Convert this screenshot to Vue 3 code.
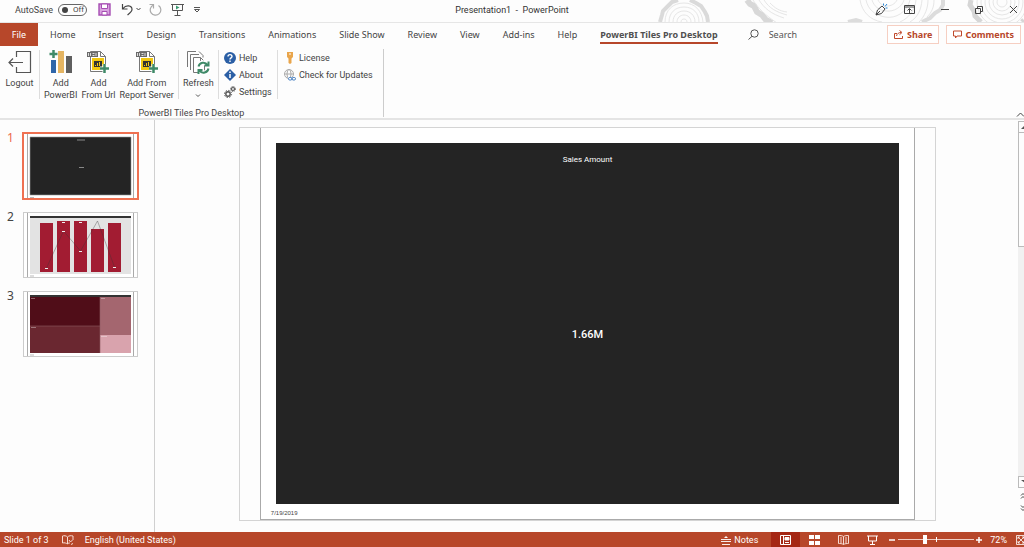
<script setup>
import { ref } from 'vue'

const tabs = ['Home', 'Insert', 'Design', 'Transitions', 'Animations', 'Slide Show', 'Review', 'View', 'Add-ins', 'Help', 'PowerBI Tiles Pro Desktop']
const activeTab = ref('PowerBI Tiles Pro Desktop')
const autosave = ref(false)
const zoom = ref(35)
const slide = ref(1)
const bars = [
  { x: 17, y: 11 },
  { x: 34, y: 9 },
  { x: 51, y: 9 },
  { x: 68, y: 17 },
  { x: 85, y: 11 },
]
</script>

<template>
  <div class="app">
    <header class="titlebar">
      <svg class="rings" width="366" height="22" viewBox="0 0 366 22" aria-hidden="true">
        <g fill="none" stroke="#e6e6e6">
          <path d="M2 22l2-7 1-4 5-5 4-4 6-2M32 0l6 3 5 3 4 6 2 4 1 6" stroke="#dadada" stroke-width="4" />
          <path d="M7 22c0-12 8-19 19-19s18 8 19 19M11 22c0-9 6-15 15-15s15 6 15 15M15 22c0-7 5-11 11-11s11 4 11 11M19 22c0-4 3-7 7-7s7 3 7 7M23 22c0-4 6-4 6 0" />
          <path d="M89 0l3 4 4 2 3 6 5 3 4 5 6 3" stroke="#d8d8d8" stroke-width="6" />
          <path d="M95 0c5 8 12 15 24 23M101 0c5 8 12 14 25 18M106 0c5 8 12 12 23 15M112 3c5 5 9 8 17 9" />
          <path d="M190 22l8-2 6 2M264 22l8-4 5-5 5-3 3-5V0" stroke="#dcdcdc" stroke-width="4" />
          <path d="M202 0c2 12 10 20 22 22M208 0c2 9 8 15 19 17s22-5 25-17M214 0c2 6 6 10 14 11s16-4 18-11M220 0c2 4 5 6 9 6s8-2 10-6M258 0c-1 10-7 18-16 22M264 0c-1 10-4 17-12 22M270 0c0 8-3 16-9 22M276 0c0 7-2 12-7 17" />
          <path d="M313 0l-1 5 4 6 1 5 6 6M364 22l2-2" stroke="#d6d6d6" stroke-width="5" />
          <circle cx="344" cy="2" r="25" /><circle cx="344" cy="2" r="21" /><circle cx="344" cy="2" r="17" />
          <circle cx="344" cy="2" r="13" /><circle cx="344" cy="2" r="9" /><circle cx="344" cy="2" r="5" />
        </g>
      </svg>
      <div class="quick">
        <label class="autosave">AutoSave
          <span class="pill"><input v-model="autosave" type="checkbox" /><i></i><span>Off</span></span>
        </label>
        <button class="ico save" aria-label="Save">
          <svg width="13" height="13" viewBox="0 0 13 13"><path d="M1 1h11v11H1z" fill="#d9a3e0" stroke="#a64db3" stroke-width="1.4" /><path d="M3.5 1h6v4.500h-6z" fill="#fff" stroke="#a64db3" /><path d="M4 8.500h5V12H4z" fill="#fff" stroke="#a64db3" /></svg>
        </button>
        <button class="ico undo" aria-label="Undo">
          <svg width="20" height="13" viewBox="0 0 20 13" fill="none" stroke="#444"><path d="M1.500 1v5h5M2 5.500C5 1.500 11 2 11 6.500c0 2-2 3.500-4.500 5.500" stroke-width="1.2" /><path d="M15.500 5l2 2 2-2" /></svg>
        </button>
        <button class="ico redo" aria-label="Redo">
          <svg width="13" height="13" viewBox="0 0 13 13" fill="none" stroke="#aaa" stroke-width="1.200"><path d="M4.500 2a5.300 5.300 0 1 0 5 .5M.5 1.500h4v4" /></svg>
        </button>
        <button class="ico show" aria-label="Start slide show">
          <svg width="13" height="13" viewBox="0 0 13 13" fill="none" stroke="#555"><path d="M0 1.500h13M1.500 2v5.500h10V2M6.500 8v4M3.500 12.500h6" /><path d="M5 2.500v4l3.500-2z" fill="#3b9a72" stroke="none" /></svg>
        </button>
        <button class="ico" aria-label="Customize toolbar">
          <svg width="6" height="6" viewBox="0 0 6 6"><path d="M0 .5h6M.5 2.500h5L3 5z" fill="none" stroke="#555" /></svg>
        </button>
      </div>
      <h1>Presentation1&nbsp; -&nbsp; PowerPoint</h1>
      <div class="window">
        <button class="ico" aria-label="Ink">
          <svg width="13" height="13" viewBox="0 0 13 13" fill="none" stroke="#444"><path d="M1 12l1.500-5L7 3l3 3-3.500 4.500zM1 12l4-4" /><path d="M8.500 2.500V.5M10 3.500L12 1M10.500 5h2" stroke="#2b88d8" /></svg>
        </button>
        <button class="ico" aria-label="Ribbon display">
          <svg width="11" height="9" viewBox="0 0 11 9" fill="none" stroke="#444"><path d="M.5.5h10v8H.5zM.5 2h10M5.500 8V4M3.500 5.500l2-2 2 2" /></svg>
        </button>
        <button class="ico" aria-label="Minimize"><svg width="8" height="9" viewBox="0 0 8 9"><path d="M0 4.500h8" stroke="#444" /></svg></button>
        <button class="ico" aria-label="Restore"><svg width="8" height="8" viewBox="0 0 8 8" fill="none" stroke="#444"><path d="M.5 2.500h5v5h-5zM2.500 2V.5h5v5H6" /></svg></button>
        <button class="ico" aria-label="Close"><svg width="9" height="9" viewBox="0 0 9 9" stroke="#444"><path d="M1 1l7 7M8 1L1 8" /></svg></button>
      </div>
    </header>

    <nav class="tabs">
      <button class="file">File</button>
      <button v-for="t in tabs" :key="t" class="tab" :class="{ active: t === activeTab }" @click="activeTab = t">{{ t }}</button>
      <label class="search">
        <svg width="11" height="11" viewBox="0 0 11 11" fill="none" stroke="#555"><circle cx="6.500" cy="4.500" r="3.700" /><path d="M4 7.300L.5 10.500" /></svg>
        <input type="text" placeholder="Search" aria-label="Search" />
      </label>
      <button class="action">
        <svg width="10" height="9" viewBox="0 0 10 9" fill="none" stroke="#c0492b"><path d="M3 3.500H.5v5h8V6M2.500 6C3 3.500 5 2.500 7 2.500M5.500.5l2.500 2-2.500 2.200" /></svg>Share
      </button>
      <button class="action">
        <svg width="9" height="9" viewBox="0 0 9 9" fill="none" stroke="#c0492b"><path d="M.5 1h8v5H4L2.500 8V6h-2z" /></svg>Comments
      </button>
    </nav>

    <section class="ribbon">
      <div class="group">
        <div class="tools">
          <button class="big w39">
            <svg width="24" height="25" viewBox="0 0 24 25" fill="none" stroke="#555"><path d="M8.500 7V1.500h14v21h-14V17M1 12.500h14M5 8.500l-4 4 4 4" stroke-width="1.200" /></svg>
            <span>Logout</span>
          </button>
          <div class="set">
            <button class="big">
              <svg width="24" height="25" viewBox="0 0 24 25"><path d="M2 10h5v13H2z" fill="#2f66a9" /><path d="M9 1h6v22H9z" fill="#e5b562" /><path d="M17 6h6v17h-6z" fill="#5f5f5f" /><path d="M4.500 0v8M.5 4h8" stroke="#3f8a68" stroke-width="2.500" /></svg>
              <span>Add<br />PowerBI</span>
            </button>
            <button class="big">
              <svg width="26" height="25" viewBox="0 0 26 25"><path d="M5.500 1.500h10l5 5v15h-15z" fill="#fff" stroke="#777" /><path d="M15.500 1.500v5h5" fill="none" stroke="#777" /><path d="M2 2h11v5H2z" fill="#6a6a6a" /><path d="M3.500 3v3M5.500 3v3M7.500 3.500h2M7.500 5.500h2M11 3v3" stroke="#ddd" /><path d="M7 8h12v12H7z" fill="#f2c811" /><path d="M9 11h8v6H9z" fill="#333" /><path d="M10.500 15v1M12.500 13v3M14.500 12v4" stroke="#f2c811" /><path d="M19.500 14v9M15 18.500h9" stroke="#fff" stroke-width="4" /><path d="M19.500 14v9M15 18.500h9" stroke="#3f8a68" stroke-width="2.500" /></svg>
              <span>Add<br />From Url</span>
            </button>
            <button class="big">
              <svg width="26" height="25" viewBox="0 0 26 25"><path d="M5.500 1.500h10l5 5v15h-15z" fill="#fff" stroke="#777" /><path d="M15.500 1.500v5h5" fill="none" stroke="#777" /><path d="M2 2h11v5H2z" fill="#6a6a6a" /><path d="M3.500 3v3M5.500 3v3M7.500 3.500h2M7.500 5.500h2M11 3v3" stroke="#ddd" /><path d="M7 8h12v12H7z" fill="#f2c811" /><path d="M9 11h8v6H9z" fill="#333" /><path d="M10.500 15v1M12.500 13v3M14.500 12v4" stroke="#f2c811" /><path d="M19.500 14v9M15 18.500h9" stroke="#fff" stroke-width="4" /><path d="M19.500 14v9M15 18.500h9" stroke="#3f8a68" stroke-width="2.500" /></svg>
              <span>Add From<br />Report Server</span>
            </button>
          </div>
          <button class="big w39">
            <svg width="26" height="25" viewBox="0 0 26 25" fill="none" stroke="#777"><path d="M2.500 17V1.500H11M5.500 20V4.500H14" /><path d="M8.500 7.500h7l4 4v11h-11z" fill="#fff" /><path d="M15.500 7.500v4h4M14 1.500l4 4v2" /><path d="M12.500 17.500a6 6 0 0 1 10-3M24 18a6 6 0 0 1-10 3.500" stroke="#fff" stroke-width="5" /><path d="M13.500 16.500a5 5 0 0 1 9-1.500M23.500 18.500a5 5 0 0 1-9 2M23.500 11.500v4h-4M13.500 24v-4h4" stroke="#3f8a68" stroke-width="2" /></svg>
            <span>Refresh</span>
            <svg class="down" width="6" height="4" viewBox="0 0 6 4" fill="none" stroke="#555"><path d="M1 .5l2 2 2-2" /></svg>
          </button>
          <div class="links help">
            <button><svg width="12" height="12" viewBox="0 0 12 12"><circle cx="6" cy="6" r="6" fill="#2b5fa5" /><path d="M4 4.500C4 2 8 2 8 4.500 8 6 6 5.800 6 7.500M6 8.500V10" fill="none" stroke="#fff" stroke-width="1.400" /></svg>Help</button>
            <button><svg width="12" height="12" viewBox="0 0 12 12"><path d="M6 0l6 6-6 6-6-6z" fill="#2b5fa5" /><path d="M6 2.500V4M6 5v4" stroke="#fff" stroke-width="1.500" /></svg>About</button>
            <button><svg width="12" height="12" viewBox="0 0 12 12" fill="none" stroke="#555"><circle cx="4" cy="8" r="2.200" stroke-width="1.400" /><circle cx="4" cy="8" r="3.600" stroke-dasharray="1.400 1.400" /><circle cx="9" cy="3" r="1.500" stroke-width="1.200" /><circle cx="9" cy="3" r="2.500" stroke-dasharray="1 1" /></svg>Settings</button>
          </div>
          <div class="links">
            <button><svg width="12" height="12" viewBox="0 0 12 12"><path d="M3 0h6v5L7.500 6.500V11L6 12 4.500 11V6.500L3 5z" fill="#e9a54b" /><path d="M5 2h2" stroke="#fff" /></svg>License</button>
            <button><svg width="12" height="12" viewBox="0 0 12 12" fill="none" stroke="#aaa"><circle cx="5" cy="5" r="4.500" /><ellipse cx="5" cy="5" rx="2" ry="4.500" /><path d="M.5 5h9" /><path d="M4 8h8v4H4z" fill="#fff" stroke="none" /><rect x="4.500" y="8.500" width="3.500" height="2.500" rx="1.200" stroke="#3d78bd" /><rect x="8" y="8.500" width="3.500" height="2.500" rx="1.200" stroke="#3d78bd" /></svg>Check for Updates</button>
          </div>
        </div>
        <div class="caption">PowerBI Tiles Pro Desktop</div>
      </div>
      <button class="collapse" aria-label="Collapse ribbon"><svg width="8" height="5" viewBox="0 0 8 5" fill="none" stroke="#444"><path d="M1 4.500l3.500-3.500L8 4.500" /></svg></button>
    </section>

    <div class="workspace">
      <aside class="thumbs">
        <div class="thumb" :class="{ selected: slide === 1 }">
          <span>1</span>
          <button aria-label="Slide 1" @click="slide = 1">
            <svg viewBox="1 1 113 64"><path d="M4.500 0v66M110.500 0v66" stroke="#aaa" /><path d="M7 4h101v58H7z" fill="#242424" stroke="#999" stroke-width=".6" /><path d="M54 7h8M56 34.500h5" stroke="#888" /><path d="M7 64.500h4" stroke="#bbb" /></svg>
          </button>
        </div>
        <div class="thumb" :class="{ selected: slide === 2 }">
          <span>2</span>
          <button aria-label="Slide 2" @click="slide = 2">
            <svg viewBox="1 1 113 64">
              <path d="M4.500 1v64M110.500 1v64" stroke="#aaa" /><path d="M7 4h101v58H7z" fill="#e3e3e3" /><path d="M7 4h101v2H7z" fill="#333" />
              <rect v-for="b in bars" :key="b.x" :x="b.x" :y="b.y" width="13" :height="60 - b.y" fill="#a21c32" />
              <path d="M23.500 56L40.500 19l17 20 17-30 17 46" fill="none" stroke="#333" stroke-opacity=".35" />
              <path d="M22 56.500h3M39 19.500h3M56 39.500h3M90 55.500h3M39 10.500h3M56 10.500h3" stroke="#eee" />
              <path d="M7 64h4" stroke="#bbb" />
            </svg>
          </button>
        </div>
        <div class="thumb" :class="{ selected: slide === 3 }">
          <span>3</span>
          <button aria-label="Slide 3" @click="slide = 3">
            <svg viewBox="1 1 113 64">
              <path d="M4.500 1v64M110.500 1v64" stroke="#aaa" />
              <path d="M7 4h101v2H7z" fill="#333" /><path d="M7 6h70v29H7z" fill="#500d18" /><path d="M7 35h70v27H7z" fill="#6a2730" />
              <path d="M77 6h31v38H77z" fill="#a4666f" /><path d="M77 44h31v18H77z" fill="#d9a3ad" />
              <path d="M7 35h70M77 6v56" stroke="#8d5a62" stroke-width=".6" /><path d="M8 7.500h4M8 36.500h5M78 7.500h4M78 45.500h6" stroke="#fff" stroke-opacity=".35" />
              <path d="M7 64h4" stroke="#bbb" />
            </svg>
          </button>
        </div>
      </aside>
      <main class="stage">
        <div class="frame">
          <article class="slide">
            <div class="tile">
              <h2>Sales Amount</h2>
              <strong>1.66M</strong>
            </div>
            <time>7/19/2019</time>
          </article>
        </div>
      </main>
      <div class="scroll" aria-hidden="true">
        <div class="arrow"><svg width="6" height="4" viewBox="0 0 6 4"><path d="M2 4l3-3 1 1v2z" fill="#555" /></svg></div>
        <div class="handle"></div>
        <div class="trough"></div>
        <div class="arrow"><svg width="6" height="4" viewBox="0 0 6 4"><path d="M2 0h4v3z" fill="#555" /></svg></div>
        <div class="jump"><svg width="6" height="30" viewBox="0 0 6 30" fill="none" stroke="#444"><path d="M3 7.500L5 5.500l2 2M3 10.500L5 8.500l2 2M3 17.500l2 2 2-2M3 20.500l2 2 2-2" /></svg></div>
      </div>
    </div>

    <footer class="status">
      <span>Slide 1 of 3</span>
      <button class="ico spell" aria-label="Spelling"><svg width="12" height="10" viewBox="0 0 12 10" fill="none" stroke="#f7dcd4"><path d="M5.500 2v7M5.500 2C4 .5 2 .5.5 1v7c2-.5 3.500 0 5 1C6 8 7 8 8 8M5.500 2C7 .5 9 .5 11 1v3M7 5l1.500 2L11.500 4M9 9.500l2-1" /></svg></button>
      <span>English (United States)</span>
      <div class="right">
        <button class="notes"><svg width="10" height="10" viewBox="0 0 10 10" stroke="#fff" fill="#fff"><path d="M0 6.500h10M1 9.500h8M0 4.500h10" stroke-width=".9" /><path d="M3 3l2-2 2 2z" stroke="none" /></svg>Notes</button>
        <button class="view on" aria-label="Normal"><svg width="11" height="10" viewBox="0 0 11 10" fill="none" stroke="#fff"><path d="M.5.5h10v9H.5zM3.500.5v9M5 7.500h4" /><path d="M5 2.500h4v2.500H5z" fill="#fff" /></svg></button>
        <button class="view" aria-label="Slide sorter"><svg width="11" height="10" viewBox="0 0 11 10" fill="#fff"><path d="M0 0h5v4H0zM6 0h5v4H6zM0 6h5v4H0zM6 6h5v4H6z" /></svg></button>
        <button class="view" aria-label="Reading view"><svg width="11" height="10" viewBox="0 0 11 10" fill="none" stroke="#f7dcd4"><path d="M5.500 1.500v8C4 8.500 2 8.500.5 8.500v-8c2 0 3.500 0 5 1 1.500-1 3-1 5-1v8c-1.500 0-3.500 0-5 1M2 3h2M2 5h2M2 7h2M7 3h2M7 5h2M7 7h2" /></svg></button>
        <button class="view" aria-label="Slide show"><svg width="11" height="10" viewBox="0 0 11 10" fill="none" stroke="#fff"><path d="M0 1h11M1.500 1v5h8V1M5.500 6v3M3 9.500h5" /></svg></button>
        <button class="step" aria-label="Zoom out"><svg width="6" height="6" viewBox="0 0 6 6"><path d="M0 3h6" stroke="#fff" stroke-width="1.500" /></svg></button>
        <input v-model="zoom" class="zoom" type="range" min="0" max="100" aria-label="Zoom" />
        <button class="step" aria-label="Zoom in"><svg width="6" height="6" viewBox="0 0 6 6"><path d="M0 3h6M3 0v6" stroke="#fff" stroke-width="1.500" /></svg></button>
        <span class="percent">72%</span>
        <button class="ico fit" aria-label="Fit to window"><svg width="10" height="10" viewBox="0 0 10 10" fill="none" stroke="#fff"><path d="M.5.5h9v9h-9zM2 4V2h2M2 6v2h2M2 2l6 6M8 2L2 8M6 2h2v2M8 6v2H6" stroke-width=".8" /></svg></button>
      </div>
    </footer>
  </div>
</template>

<style>
body { margin: 0; }
</style>

<style scoped>
.app {
  display: flex;
  flex-direction: column;
  min-height: 100vh;
  overflow: hidden;
  background: #fdfdfd;
  color: #444;
  font-family: Roboto, "Noto Sans", sans-serif;
  font-size: 9px;
  line-height: 12px;
}
.app * { box-sizing: border-box; }
button, input { margin: 0; padding: 0; border: 0; background: none; color: inherit; font: inherit; }
svg { display: block; flex: none; }
.ico { flex: none; }

.titlebar { position: relative; display: grid; grid-template-columns: 1fr auto 1fr; align-items: center; height: 23px; padding-bottom: 3px; border-bottom: 1px solid #e6e6e6; }
.titlebar h1 { position: relative; margin: 0; font-size: 9px; font-weight: 400; color: #333; }
.rings { position: absolute; top: 0; right: 0; }
.quick { display: flex; align-items: center; padding-left: 15px; }
.autosave { display: flex; align-items: center; justify-content: space-between; width: 72px; }
.pill { position: relative; display: flex; align-items: center; gap: 5px; width: 29px; height: 12px; padding-left: 3px; border: 1px solid #666; border-radius: 6px; font-size: 8px; }
.pill input { position: absolute; inset: 0; opacity: 0; }
.pill i { width: 6px; height: 6px; border-radius: 50%; background: #444; }
.save { margin-left: 11px; }
.undo { margin-left: 10px; }
.redo { margin-left: 8px; }
.show { margin: 0 10px 0 9px; }
.window { position: relative; display: flex; justify-content: flex-end; align-items: center; gap: 16px; padding-right: 6px; }
.window .ico:nth-child(n + 3) { margin-left: 10px; }

.tabs { display: flex; align-items: stretch; gap: 1px; height: 23px; padding-right: 3px; font-family: "Noto Sans", sans-serif; }
.file { width: 38px; background: #b7472a; color: #fff; }
.tab { position: relative; padding: 0 11px; white-space: nowrap; }
.active { font-weight: 700; color: #505050; }
.active::after { content: ""; position: absolute; left: 11px; right: 11px; bottom: 2px; height: 2px; background: #b7472a; }
.search { display: flex; flex: 1; align-items: center; gap: 10px; min-width: 0; padding-left: 18px; }
.search input { flex: 1; min-width: 0; width: 40px; outline: none; }
.search input::placeholder { color: #555; opacity: 1; }
.action { display: flex; align-items: center; gap: 3px; height: 19px; margin: 2px 0 0 6px; padding: 0 6px; border: 1px solid #f6cfc2; background: #fff; color: #b7472a; font-weight: 700; }

.ribbon { display: flex; justify-content: space-between; align-items: flex-end; height: 74px; border-bottom: 2px solid #e4e4e4; }
.group { align-self: stretch; display: flex; flex-direction: column; margin: 3px 0 1px; border-right: 1px solid #ccc; }
.tools { display: flex; height: 50px; padding-top: 1px; white-space: nowrap; }
.big { display: flex; flex-direction: column; align-items: center; gap: 2px; }
.w39 { width: 39px; }
.set { display: flex; gap: 4px; padding: 0 4px; border: solid #ddd; border-width: 0 1px; }
.down { margin-top: 3px; }
.links { display: flex; flex-direction: column; gap: 5px; padding: 2px 10px 0 6px; }
.links.help { width: 60px; padding: 2px 0 0 5px; }
.links button { display: flex; align-items: center; gap: 3px; }
.help { border: solid #ddd; border-width: 0 1px; }
.caption { margin-top: auto; line-height: 8px; text-align: center; }
.collapse { margin-bottom: 1px; }

.workspace { display: flex; flex: 1; min-height: 0; }
.thumbs { display: flex; flex-direction: column; gap: 13px; width: 155px; padding: 13px 0 0 7px; border-right: 1px solid #d0d0d0; }
.thumb { display: flex; font-family: "Noto Sans", sans-serif; font-size: 12px; line-height: 10px; }
.thumb span { width: 16px; }
.thumb button { width: 115px; height: 66px; border: 1px solid #ccc; background: #fff; }
.thumb svg { width: 100%; height: 100%; }
.selected span { color: #ed6b4d; }
.selected button { border-color: transparent; outline: 2px solid #ef7152; outline-offset: -1px; }
.stage { display: flex; flex: 1; justify-content: center; padding: 7px 0 11px 2px; }
.frame { display: flex; width: 81%; padding: 0 20px; border: 1px solid #d4d4d4; }
.slide { display: flex; flex: 1; flex-direction: column; padding: 15px 15px 0; border: solid #aaa; border-width: 0 1px 1px; background: #fff; }
.tile { display: grid; flex: 1; place-items: center; position: relative; background: #242424; color: #fff; }
.tile h2 { position: absolute; top: 11px; margin: 0; font-size: 8px; font-weight: 400; }
.tile strong { padding-top: 23px; font-size: 11px; font-weight: 500; }
.slide time { margin-left: -5px; padding-top: 3px; font-size: 6px; font-family: "Liberation Sans", sans-serif; }
.scroll { display: flex; flex-direction: column; width: 6px; padding-top: 1px; overflow: hidden; }
.arrow { display: flex; align-items: center; height: 12px; border: solid #bbb; border-width: 1px 0 1px 1px; }
.handle { height: 114px; border: solid #bbb; border-width: 0 0 1px 1px; }
.trough { flex: 1; background: #f1f1f1; }
.jump { height: 44px; }

.status { display: flex; align-items: center; height: 15px; padding-left: 4px; background: #b7472a; color: #fff; white-space: nowrap; }
.spell { margin: 0 11px 0 13px; }
.right { display: flex; flex: 1; justify-content: flex-end; align-items: center; align-self: stretch; }
.notes { display: flex; align-items: center; gap: 3px; margin-right: 13px; }
.view { display: flex; align-items: center; justify-content: center; align-self: stretch; width: 29px; }
.on { background: #a52714; }
.step { margin-left: 2px; }
.zoom { width: 76px; height: 13px; margin-left: 3px; appearance: none; background: linear-gradient(#fff, #fff) center / 1px 5px no-repeat, linear-gradient(#f0cdc3, #f0cdc3) center / 100% 1px no-repeat; }
.zoom::-webkit-slider-thumb { appearance: none; width: 4px; height: 9px; background: #fff; }
.percent { margin: 0 9px 0 8px; }
.fit { width: 8px; overflow: hidden; }
</style>
